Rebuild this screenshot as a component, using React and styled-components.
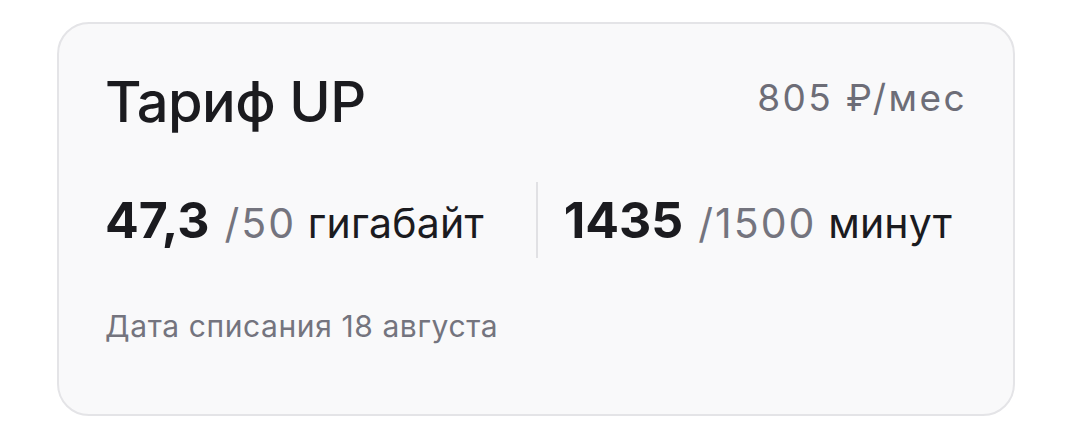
import styled, { createGlobalStyle } from "styled-components"

const Global = createGlobalStyle`
    body {
        margin: 0;
        background: #ffffff;
        font-family: Inter, "Noto Sans", sans-serif;
    }
`

const Page = styled.div`
    padding: 22px 58px 6px 57px;
`

const Card = styled.div`
    box-sizing: border-box;
    height: 394px;
    background: #f9f9fa;
    border: 2px solid #e4e4e7;
    border-radius: 32px;
    padding: 50px 46px 0 46px;
    display: flex;
    flex-direction: column;
`

const Header = styled.div`
    display: flex;
    justify-content: space-between;
    align-items: flex-start;
`

const Title = styled.h1`
    margin: 0;
    font-size: 56px;
    font-weight: 500;
    line-height: 56px;
    color: #1b1b1f;
    letter-spacing: -0.6px;
`

const Price = styled.span`
    font-size: 37px;
    line-height: 44px;
    color: #6d6d77;
    letter-spacing: 2.4px;
    margin-top: 2px;
    white-space: nowrap;
`

const Stats = styled.div`
    display: flex;
    align-items: center;
    margin-top: 52px;
`

const Stat = styled.div`
    display: flex;
    align-items: baseline;
    flex-shrink: 0;
    white-space: nowrap;
    gap: 15px;
    padding: ${p => p.$first ? "0 52px 0 0" : "0 0 0 26px"};
`

const Divider = styled.div`
    flex-shrink: 0;
    width: 2px;
    height: 76px;
    background: #e1e1e4;
`

const Value = styled.span`
    font-size: 50px;
    font-weight: 700;
    color: #1b1b1f;
`

const Limit = styled.span`
    font-size: 41px;
    color: #1b1b1f;
    letter-spacing: 0.2px;
    span {
        color: #74747e;
        letter-spacing: 2px;
    }
`

const Footer = styled.div`
    margin-top: 50px;
    font-size: 30px;
    color: #74747e;
    letter-spacing: 0.6px;
`

const App = () => {
    return (
        <Page>
            <Global />
            <Card>
                <Header>
                    <Title>Тариф UP</Title>
                    <Price>805 ₽/мес</Price>
                </Header>
                <Stats>
                    <Stat $first>
                        <Value>47,3</Value>
                        <Limit><span>/50</span> гигабайт</Limit>
                    </Stat>
                    <Divider />
                    <Stat>
                        <Value>1435</Value>
                        <Limit><span>/1500</span> минут</Limit>
                    </Stat>
                </Stats>
                <Footer>Дата списания 18 августа</Footer>
            </Card>
        </Page>
    )
}

export default App
